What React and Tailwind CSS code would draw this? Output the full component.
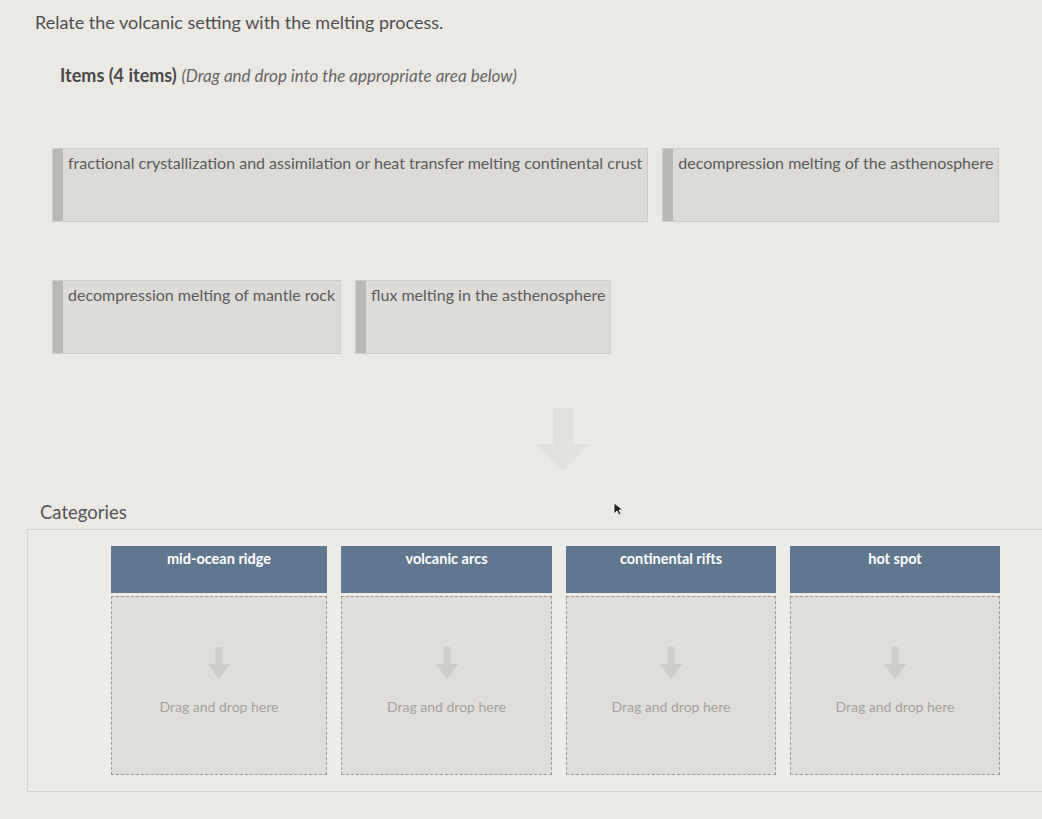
import React from 'react';

const items = [
  ['fractional crystallization and assimilation or heat transfer melting continental crust', 'decompression melting of the asthenosphere'],
  ['decompression melting of mantle rock', 'flux melting in the asthenosphere'],
];

const categories = [
  { name: 'mid-ocean ridge', w: 'w-[216px]' },
  { name: 'volcanic arcs', w: 'w-[211px]' },
  { name: 'continental rifts', w: 'w-[210px]' },
  { name: 'hot spot', w: 'w-[210px]' },
];

const DownArrow = ({ className, big }) => (
  <svg className={className} viewBox="0 0 52 64" fill="currentColor">
    {big ? (
      <path d="M16 0h20v36h16L26 64 0 36h16z" />
    ) : (
      <path d="M19 0h14v34h15L26 64 4 34h15z" />
    )}
  </svg>
);

const Item = ({ text }) => (
  <div className="flex h-[74px] bg-[#dcdbd7] border border-[#cfcdc9]">
    {/* grip */}
    <div className="w-[10px] bg-[#b9b8b5] shrink-0" />
    <div className="pl-[5px] pr-[5px] pt-[3px] text-[16px] leading-[22px] text-[#5a5a5a] whitespace-nowrap">
      {text}
    </div>
  </div>
);

const App = () => {
  return (
    <div className="relative min-h-[819px] w-[1042px] overflow-hidden bg-[#ebe9e4] font-['Lato','Open_Sans',sans-serif]">
      <div className="pt-[10px] pl-[35px]">
        <h1 className="text-[18px] leading-[24px] text-[#4f4f4f]">
          Relate the volcanic setting with the melting process.
        </h1>
        <p className="mt-[30px] pl-[25px] text-[18px] leading-[22px] text-[#4a4a4a]">
          <span className="font-bold">Items (4 items)</span>{' '}
          <span className="italic text-[17px] text-[#666]">(Drag and drop into the appropriate area below)</span>
        </p>
      </div>

      {/* Items */}
      <div className="pl-[52px] mt-[61px] flex flex-col gap-[58px]">
        {items.map((row, i) => (
          <div key={i} className="flex gap-[14px] items-start">
            {row.map(t => (
              <Item key={t} text={t} />
            ))}
          </div>
        ))}
      </div>

      {/* faint arrow */}
      <div className="flex justify-center pl-[84px] mt-[54px]">
        <DownArrow big className="w-[52px] h-[64px] text-[#e2e0db]" />
      </div>

      {/* Categories */}
      <div className="pl-[40px] mt-[28px] text-[18.5px] leading-[24px] text-[#555]">Categories</div>
      <div className="ml-[27px] mt-[5px] border-t border-b border-l border-[#d6d4cf] bg-[#edebe7] pt-[16px] pb-[16px] pl-[83px]">
        <div className="flex gap-[14px]">
          {categories.map(c => (
            <div key={c.name} className={`${c.w} flex flex-col gap-[3px]`}>
              <div className="h-[47px] bg-[#5f7890] text-white text-[14.5px] font-bold text-center pt-[3px] leading-[20px]">
                {c.name}
              </div>
              <div className="h-[179px] border border-dashed border-[#9c9b98] bg-[#e0ded9] flex flex-col items-center pt-[50px]">
                <DownArrow className="w-[26px] h-[32px] text-[#cfcdc8]" />
                <div className="mt-[17px] text-[14px] text-[#a3a29f]">Drag and drop here</div>
              </div>
            </div>
          ))}
        </div>
      </div>

      {/* mouse cursor */}
      <svg className="absolute left-[613px] top-[502px] w-[10px] h-[14px]" viewBox="0 0 10 14">
        <path d="M1 1v11l3-3 2 4 2-1-2-4h4z" fill="#222" stroke="#fff" strokeWidth="0.8" />
      </svg>
    </div>
  );
};

export default App;
